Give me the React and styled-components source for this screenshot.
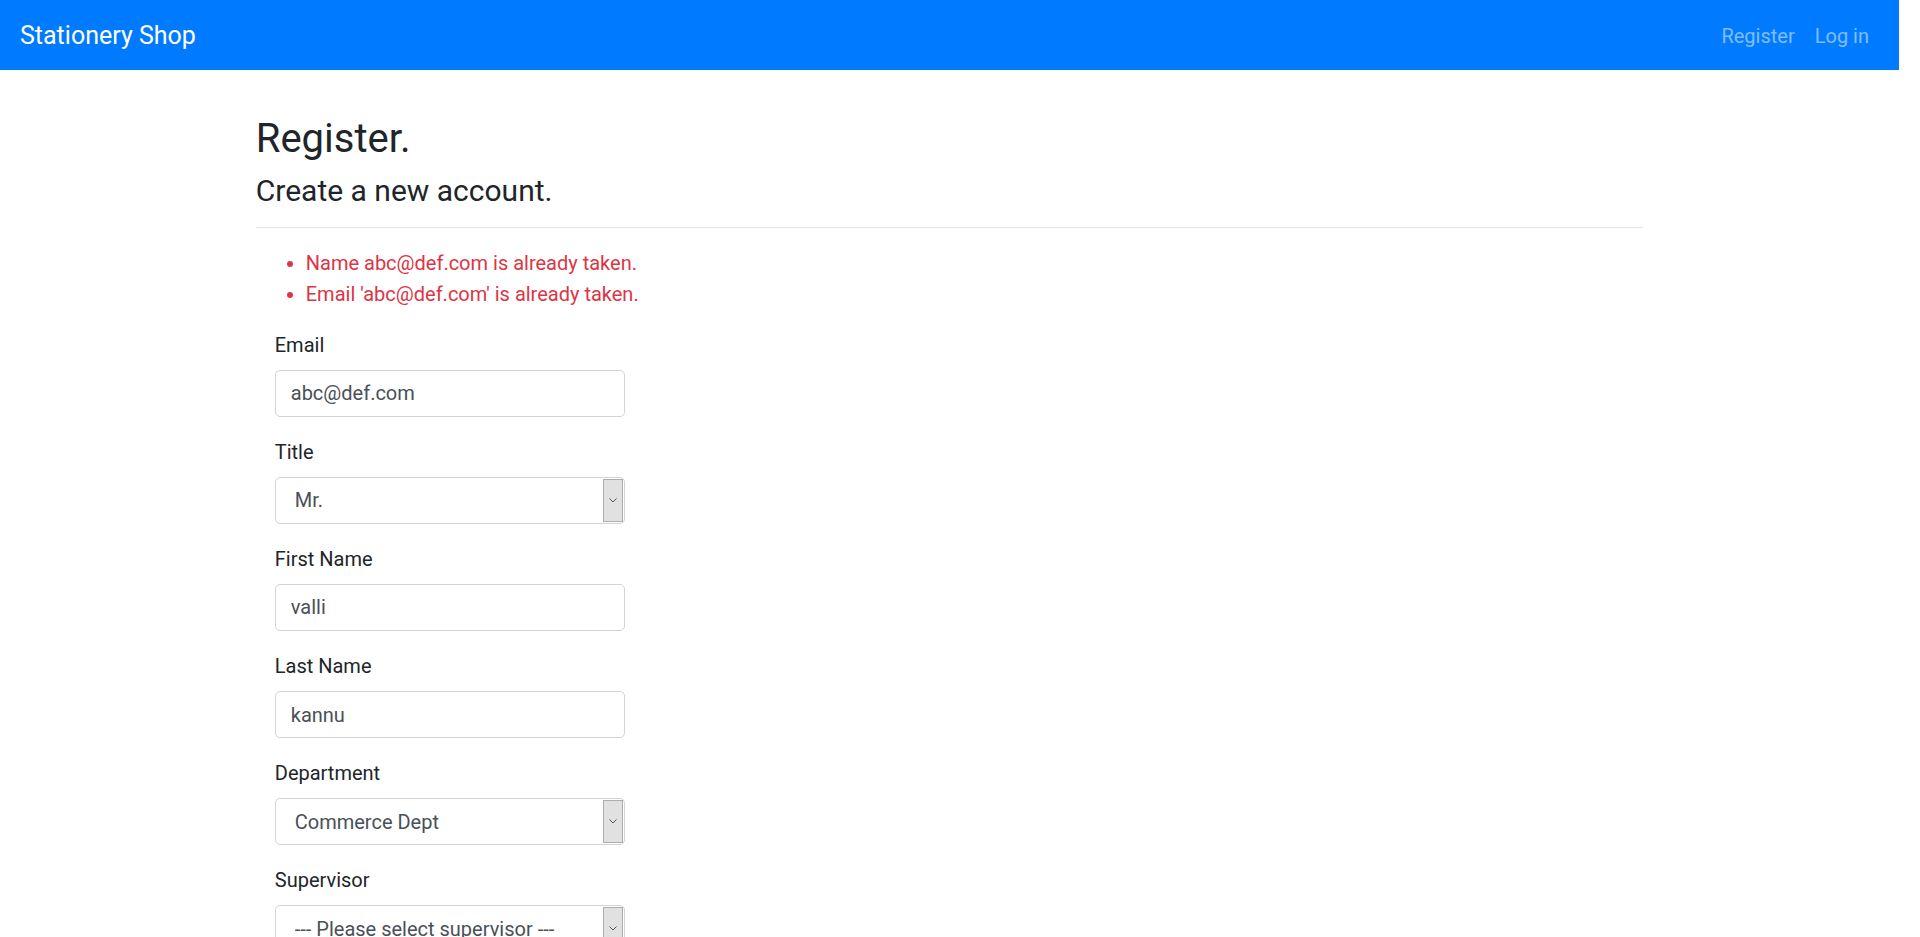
import React from "react";
import styled, { createGlobalStyle } from "styled-components";

// Screenshot was taken at 125% zoom, so Bootstrap sizes are multiplied by 1.25 here.

const GlobalStyle = createGlobalStyle`
  html, body {
    margin: 0;
    height: 100%;
    overflow: hidden;
    background: #fff;
  }
  body {
    font-family: Roboto, "Segoe UI", "Noto Sans", Arial, sans-serif;
    font-size: 20px;
    line-height: 30px;
    color: #212529;
  }
  * {
    box-sizing: border-box;
  }
`;

const fields = [
  { label: "Email", type: "input", value: "abc@def.com" },
  { label: "Title", type: "select", value: "Mr.", options: ["Mr.", "Mrs.", "Ms.", "Dr."] },
  { label: "First Name", type: "input", value: "valli" },
  { label: "Last Name", type: "input", value: "kannu" },
  {
    label: "Department",
    type: "select",
    value: "Commerce Dept",
    options: ["Commerce Dept", "Science Dept", "Arts Dept"],
  },
  {
    label: "Supervisor",
    type: "select",
    value: "--- Please select supervisor ---",
    options: ["--- Please select supervisor ---"],
  },
  { label: "Password", type: "password", value: "" },
  { label: "Confirm password", type: "password", value: "" },
];

const errors = [
  "Name abc@def.com is already taken.",
  "Email 'abc@def.com' is already taken.",
];

const Chevron = () => (
  <svg width="8" height="5" viewBox="0 0 8 5" fill="none">
    <path d="M0.5 0.5 L4 4 L7.5 0.5" stroke="#555" strokeWidth="1" />
  </svg>
);

const Field = ({ field }) => {
  if (field.type === "select") {
    return (
      <S.Group>
        <S.Label>{field.label}</S.Label>
        <S.SelectWrap>
          <S.Select defaultValue={field.value}>
            {field.options.map((o) => (
              <option key={o}>{o}</option>
            ))}
          </S.Select>
          <S.Arrow>
            <Chevron />
          </S.Arrow>
        </S.SelectWrap>
      </S.Group>
    );
  }
  return (
    <S.Group>
      <S.Label>{field.label}</S.Label>
      <S.Input type={field.type === "password" ? "password" : "text"} defaultValue={field.value} />
    </S.Group>
  );
};

const App = () => {
  return (
    <S.Page>
      <GlobalStyle />
      <S.Navbar>
        <S.Brand href="#">Stationery Shop</S.Brand>
        <S.NavLinks>
          <S.NavLink href="#">Register</S.NavLink>
          <S.NavLink href="#">Log in</S.NavLink>
        </S.NavLinks>
      </S.Navbar>

      <S.Container>
        <S.Heading>Register.</S.Heading>
        <S.SubHeading>Create a new account.</S.SubHeading>
        <S.Rule />

        <S.Errors>
          {errors.map((e) => (
            <li key={e}>{e}</li>
          ))}
        </S.Errors>

        <S.Form onSubmit={(e) => e.preventDefault()}>
          {fields.map((f) => (
            <Field key={f.label} field={f} />
          ))}
          <S.Button type="submit">Register</S.Button>
        </S.Form>
      </S.Container>
    </S.Page>
  );
};

const S = {
  Page: styled.div`
    margin-right: 21px;
  `,
  Navbar: styled.nav`
    height: 70px;
    background: #007bff;
    display: flex;
    align-items: center;
    justify-content: space-between;
    padding: 0 20px;
  `,
  Brand: styled.a`
    color: #fff;
    font-size: 25px;
    line-height: 37px;
    text-decoration: none;
    margin-top: 1px;
  `,
  NavLinks: styled.div`
    display: flex;
    margin-top: 1px;
  `,
  NavLink: styled.a`
    color: rgba(255, 255, 255, 0.5);
    text-decoration: none;
    padding: 0 10px;
    font-size: 20px;
  `,
  Container: styled.main`
    width: 1387.5px;
    margin: 0 auto;
    padding-top: 45px;
  `,
  Heading: styled.h2`
    margin: 0 0 10px;
    font-size: 40px;
    line-height: 48px;
    font-weight: 400;
  `,
  SubHeading: styled.h4`
    margin: 0;
    font-size: 30px;
    line-height: 36px;
    font-weight: 400;
  `,
  Rule: styled.hr`
    margin: 18px 0 20px;
    border: 0;
    border-top: 1px solid rgba(0, 0, 0, 0.1);
  `,
  Errors: styled.ul`
    margin: 0 0 20.5px;
    padding-left: 50px;
    color: #dc3545;
    li {
      line-height: 30.5px;
    }
  `,
  Form: styled.form`
    padding-left: 19px;
  `,
  Group: styled.div`
    margin-bottom: 19.6px;
  `,
  Label: styled.label`
    display: block;
    margin-bottom: 10px;
  `,
  Input: styled.input`
    display: block;
    width: 350px;
    height: 47.5px;
    padding: 7.5px 15px;
    font: inherit;
    color: #495057;
    background: #fff;
    border: 1px solid #ced4da;
    border-radius: 5px;
    outline: none;
  `,
  SelectWrap: styled.div`
    position: relative;
    width: 350px;
  `,
  Select: styled.select`
    display: block;
    width: 100%;
    height: 47.5px;
    padding: 7.5px 15px 7.5px 19px;
    font: inherit;
    color: #495057;
    background: #fff;
    border: 1px solid #ced4da;
    border-radius: 5px;
    appearance: none;
    outline: none;
  `,
  Arrow: styled.span`
    position: absolute;
    top: 2px;
    right: 2px;
    bottom: 2px;
    width: 20px;
    display: flex;
    align-items: center;
    justify-content: center;
    background: #e1e1e1;
    border: 1px solid #adadad;
    pointer-events: none;
  `,
  Button: styled.button`
    font: inherit;
    color: #fff;
    background: #007bff;
    border: 1px solid #007bff;
    border-radius: 5px;
    padding: 7.5px 15px;
  `,
};

export default App;
